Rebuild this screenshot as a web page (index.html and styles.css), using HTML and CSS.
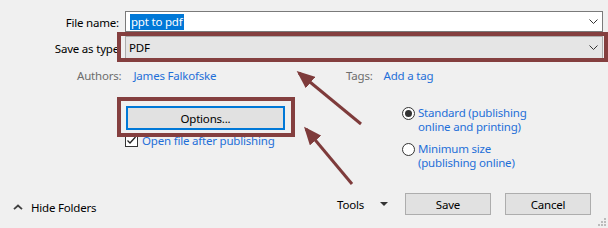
FILE: index.html
```html
<!DOCTYPE html>
<html>
<head>
<meta charset="utf-8">
<link rel="stylesheet" href="styles.css">
</head>
<body>
<div class="dialog">
  <div class="form">
    <div class="label">File name:</div>
    <div class="input">
      <span class="sel">ppt to pdf</span>
      <svg class="chev" width="9" height="5" viewBox="0 0 9 5"><path d="M0.5 0.5 L4.5 4.5 L8.5 0.5" fill="none" stroke="#333" stroke-width="1"/></svg>
    </div>
    <div class="label">Save as type</div>
    <div class="select">
      <span>PDF</span>
      <svg class="chev" width="9" height="5" viewBox="0 0 9 5"><path d="M0.5 0.5 L4.5 4.5 L8.5 0.5" fill="none" stroke="#333" stroke-width="1"/></svg>
      <div class="mark mark-select"></div>
    </div>
  </div>

  <div class="meta">
    <div class="pair"><span class="muted">Authors:</span><span class="link">James Falkofske</span></div>
    <div class="pair pair-tags"><span class="muted">Tags:</span><span class="link">Add a tag</span></div>
  </div>

  <div class="details">
    <div class="left">
      <div class="mark-box">
        <div class="btn btn-focus">Options...</div>
      </div>
      <div class="check-row">
        <svg class="check" width="13" height="13" viewBox="0 0 13 13"><rect x="0.5" y="0.5" width="12" height="12" fill="#fff" stroke="#333"/><path d="M2.5 6.5 L5 9 L10.5 3" fill="none" stroke="#222" stroke-width="1.3"/></svg>
        <span class="link">Open file after publishing</span>
      </div>
    </div>
    <div class="radios">
      <div class="radio-opt">
        <svg class="radio" width="13" height="13" viewBox="0 0 13 13"><circle cx="6.5" cy="6.5" r="6" fill="#fff" stroke="#333"/><circle cx="6.5" cy="6.5" r="3.5" fill="#333"/></svg>
        <div class="radio-text link"><div>Standard (publishing</div><div>online and printing)</div></div>
      </div>
      <div class="radio-opt">
        <svg class="radio" width="13" height="13" viewBox="0 0 13 13"><circle cx="6.5" cy="6.5" r="6" fill="#fff" stroke="#333"/></svg>
        <div class="radio-text link"><div>Minimum size</div><div>(publishing online)</div></div>
      </div>
    </div>
  </div>

  <div class="bar">
    <div class="hide">
      <svg width="10" height="6" viewBox="0 0 10 6"><path d="M1 5.2 L5 1.5 L9 5.2" fill="none" stroke="#404040" stroke-width="1.8"/></svg>
      <span>Hide Folders</span>
    </div>
    <div class="tools">
      <span>Tools</span>
      <svg width="8" height="4" viewBox="0 0 8 4"><path d="M0 0 L8 0 L4 4 Z" fill="#333"/></svg>
    </div>
    <div class="btn btn-bar">Save</div>
    <div class="btn btn-bar">Cancel</div>
  </div>
</div>

<svg class="arrows" width="608" height="228" viewBox="0 0 608 228">
  <defs>
    <marker id="ah" markerWidth="6" markerHeight="5" refX="5" refY="2.5" orient="auto" markerUnits="strokeWidth">
      <path d="M0 0 L6 2.5 L0 5 Z" fill="#7e3b3b"/>
    </marker>
  </defs>
  <line x1="361" y1="124" x2="299" y2="73" stroke="#7e3b3b" stroke-width="3" marker-end="url(#ah)"/>
  <line x1="352" y1="184" x2="306" y2="129" stroke="#7e3b3b" stroke-width="3" marker-end="url(#ah)"/>
</svg>

<svg class="grip" width="8" height="8" viewBox="0 0 8 8">
  <rect x="6" y="0" width="2" height="2" fill="#bcbcbc"/>
  <rect x="3" y="3" width="2" height="2" fill="#bcbcbc"/>
  <rect x="6" y="3" width="2" height="2" fill="#bcbcbc"/>
  <rect x="0" y="6" width="2" height="2" fill="#bcbcbc"/>
  <rect x="3" y="6" width="2" height="2" fill="#bcbcbc"/>
  <rect x="6" y="6" width="2" height="2" fill="#bcbcbc"/>
</svg>
</body>
</html>
```

FILE: styles.css
```css
html, body {
  margin: 0;
  padding: 0;
}
body {
  width: 608px;
  height: 228px;
  background: #f0f0f0;
  position: relative;
  overflow: hidden;
  font-family: "Noto Sans", "Open Sans", sans-serif;
  font-size: 11.5px;
  letter-spacing: -0.2px;
  color: #000;
}
.dialog {
  height: 228px;
  box-sizing: border-box;
  padding-top: 11px;
  display: flex;
  flex-direction: column;
}
.form {
  display: grid;
  grid-template-columns: 119px 478px;
  column-gap: 6px;
  row-gap: 4px;
}
.label {
  text-align: right;
  display: flex;
  align-items: center;
  justify-content: flex-end;
  white-space: nowrap;
  padding-top: 1px;
}
.input {
  height: 21px;
  box-sizing: border-box;
  border: 1px solid #7a7a7a;
  background: #fff;
  display: flex;
  align-items: center;
  padding-left: 4px;
  padding-right: 4px;
}
.sel {
  background: #0078d7;
  color: #fff;
  line-height: 16px;
  padding: 0 1px;
}
.chev {
  margin-left: auto;
  margin-right: 0;
}
.select {
  position: relative;
  height: 23px;
  box-sizing: border-box;
  border: 1px solid #adadad;
  background: #e5e5e5;
  display: flex;
  align-items: center;
  padding-left: 3px;
  padding-right: 4px;
}
.mark {
  position: absolute;
  border: 4px solid #843f3f;
  pointer-events: none;
}
.mark-select {
  left: -9px;
  top: -5px;
  right: -6px;
  bottom: -4px;
}
.meta {
  margin-top: 9px;
  display: grid;
  grid-template-columns: 269px auto;
  padding-left: 77px;
  line-height: 16px;
}
.pair {
  display: flex;
  gap: 12px;
}
.pair-tags {
  gap: 11px;
}
.muted {
  color: #6d6d6d;
}
.link {
  color: #1f6fd8;
}
.details {
  margin-top: 13px;
  display: flex;
  padding-left: 117px;
}
.left {
  width: 285px;
  display: flex;
  flex-direction: column;
}
.mark-box {
  width: 178px;
  height: 40px;
  box-sizing: border-box;
  border: 4px solid #843f3f;
  padding: 5px 6px 3px 5px;
  position: relative;
  z-index: 2;
}
.btn {
  box-sizing: border-box;
  background: #e1e1e1;
  border: 1px solid #adadad;
  display: flex;
  align-items: center;
  justify-content: center;
}
.btn-focus {
  width: 159px;
  height: 24px;
  border: 2px solid #0078d7;
}
.check-row {
  margin-top: -3px;
  margin-left: 8px;
  display: flex;
  align-items: flex-start;
  gap: 4px;
  line-height: 14px;
}
.check {
  flex: none;
}
.radios {
  margin-top: 9px;
  display: flex;
  flex-direction: column;
  gap: 8px;
}
.radio-opt {
  display: flex;
  align-items: flex-start;
  gap: 3px;
}
.radio-text div {
  height: 14px;
  line-height: 14px;
  white-space: nowrap;
}
.radio {
  flex: none;
  margin-top: 1px;
}
.bar {
  margin-top: auto;
  margin-bottom: 13px;
  display: flex;
  align-items: center;
  padding-left: 13px;
  padding-right: 17px;
}
.hide {
  display: flex;
  align-items: center;
  gap: 8px;
  margin-top: 6px;
}
.tools {
  margin-left: auto;
  width: 51px;
  display: flex;
  align-items: center;
  justify-content: space-between;
  margin-right: 17px;
}
.btn-bar {
  width: 86px;
  height: 22px;
}
.btn-bar + .btn-bar {
  margin-left: 14px;
}
.arrows {
  position: absolute;
  left: 0;
  top: 0;
  pointer-events: none;
}
.grip {
  position: absolute;
  right: 2px;
  bottom: 2px;
}
```
